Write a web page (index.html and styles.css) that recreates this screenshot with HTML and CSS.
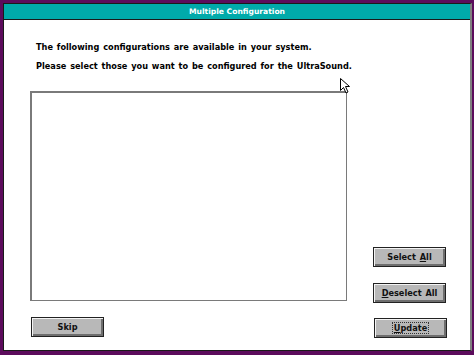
FILE: index.html
```html
<!DOCTYPE html>
<html>
<head>
<meta charset="utf-8">
<link rel="stylesheet" href="styles.css">
</head>
<body>
<div class="window">
  <div class="titlebar">Multiple Configuration</div>
  <div class="content">
    <div class="intro">
      <p>The following configurations are available in your system.</p>
      <p>Please select those you want to be configured for the UltraSound.</p>
    </div>
    <div class="main-row">
      <div class="listbox"></div>
      <div class="side">
        <button class="btn">Select <u>A</u>ll</button>
        <button class="btn"><u>D</u>eselect All</button>
      </div>
    </div>
    <div class="bottom-row">
      <button class="btn btn-skip">Skip</button>
      <button class="btn btn-update"><span class="focus"><u>U</u>pdate</span></button>
    </div>
  </div>
  <svg class="cursor" width="12" height="16" viewBox="0 0 12 16">
    <path d="M0.5 0.5 L0.5 12.5 L3.5 9.5 L6 15 L8 14 L5.5 8.5 L9.5 8.5 Z" fill="#fff" stroke="#000" stroke-width="1"/>
  </svg>
</div>
</body>
</html>
```
FILE: styles.css
```css
html, body {
  margin: 0;
  padding: 0;
}
body {
  background: #5c0c5c;
  width: 474px;
  height: 355px;
  overflow: hidden;
  padding-top: 3px;
  padding-left: 3px;
  box-sizing: border-box;
  font-family: "DejaVu Sans", "Liberation Sans", sans-serif;
}
.window {
  position: relative;
  width: 469px;
  height: 348px;
  box-sizing: border-box;
  border: 1px solid #1a1a1a;
  border-right: 2px solid #808080;
  background: #fff;
  display: flex;
  flex-direction: column;
}
.titlebar {
  height: 15px;
  background: #00aaaa;
  border-bottom: 1px solid #1a1a1a;
  color: #fff;
  font-weight: bold;
  font-size: 7.6px;
  line-height: 15px;
  text-align: center;
}
.content {
  padding-left: 26px;
  padding-top: 18px;
  display: flex;
  flex-direction: column;
}
.intro {
  padding-left: 6px;
}
.intro p {
  margin: 0;
  font-size: 8.2px;
  line-height: 19px;
  font-weight: bold;
  color: #000;
  word-spacing: 1px;
}
.main-row {
  margin-top: 15px;
  display: flex;
  align-items: flex-end;
}
.listbox {
  width: 317px;
  height: 210px;
  box-sizing: border-box;
  border-top: 2px solid #7a7a7a;
  border-left: 2px solid #7a7a7a;
  border-right: 1px solid #7a7a7a;
  border-bottom: 1px solid #7a7a7a;
  background: #fff;
}
.side {
  margin-left: 26px;
  margin-bottom: -2px;
  display: flex;
  flex-direction: column;
  gap: 16px;
}
.btn {
  width: 73px;
  height: 20px;
  box-sizing: border-box;
  padding: 0;
  margin: 0;
  background: #b8b8b8;
  border: 1px solid #222;
  box-shadow: inset 1px 1px 0 #f4f4f4, inset -2px -2px 0 #6e6e6e;
  font-family: "DejaVu Sans", "Liberation Sans", sans-serif;
  font-size: 8.2px;
  font-weight: bold;
  color: #111;
  word-spacing: 1px;
  line-height: 18px;
  text-align: center;
}
.btn u {
  text-decoration-thickness: 1px;
  text-underline-offset: 1px;
}
.bottom-row {
  margin-top: 16px;
  display: flex;
  justify-content: space-between;
  width: 416px;
  padding-left: 1px;
}
.btn-update {
  margin-top: 1px;
}
.focus {
  border: 1px dotted #333;
  padding: 0 1px;
}
.cursor {
  position: absolute;
  left: 336px;
  top: 74px;
}
```
